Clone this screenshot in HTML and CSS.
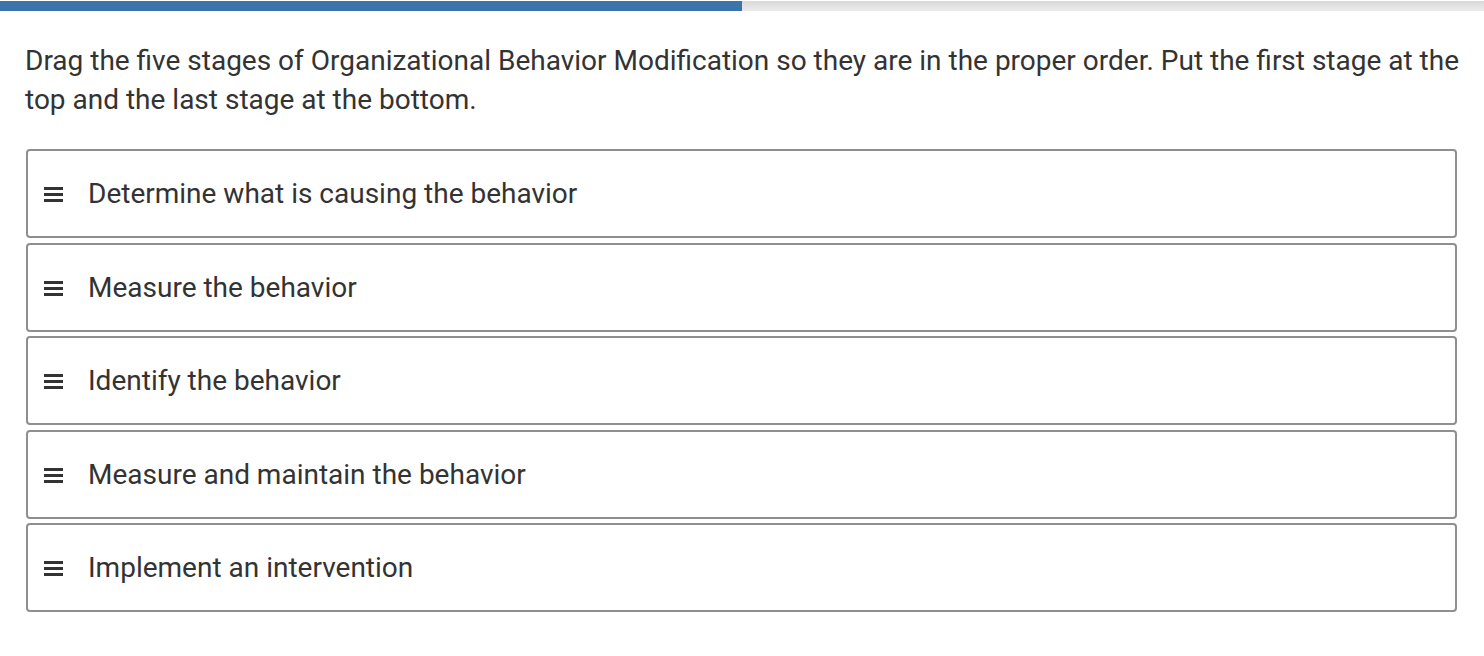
FILE: index.html
```html
<!DOCTYPE html>
<html>
<head>
<meta charset="utf-8">
<link rel="stylesheet" href="styles.css">
</head>
<body>
<div class="progress"><div class="progress-fill" style="width: 50%"></div></div>
<main class="content">
  <p class="prompt">Drag the five stages of Organizational Behavior Modification so they are in the proper order. Put the first stage at the top and the last stage at the bottom.</p>
  <ul class="sortable">
    <li class="item"><span class="handle"><i></i><i></i><i></i></span><span class="label">Determine what is causing the behavior</span></li>
    <li class="item"><span class="handle"><i></i><i></i><i></i></span><span class="label">Measure the behavior</span></li>
    <li class="item"><span class="handle"><i></i><i></i><i></i></span><span class="label">Identify the behavior</span></li>
    <li class="item"><span class="handle"><i></i><i></i><i></i></span><span class="label">Measure and maintain the behavior</span></li>
    <li class="item"><span class="handle"><i></i><i></i><i></i></span><span class="label">Implement an intervention</span></li>
  </ul>
</main>
</body>
</html>
```
FILE: styles.css
```css
html, body {
  margin: 0;
  padding: 0;
  background: #fff;
}
body {
  font-family: Roboto, "Liberation Sans", sans-serif;
  color: #333;
}
.progress {
  margin-top: 1px;
  height: 10px;
  background: linear-gradient(#d9d9d9, #ebebeb);
}
.progress-fill {
  height: 100%;
  background: #3a74ab;
}
.content {
  padding: 0 20px 0 25px;
}
.prompt {
  margin: 30px 0 0;
  font-size: 28px;
  line-height: 39px;
  color: #333;
}
.sortable {
  list-style: none;
  margin: 30px 7px 0 1px;
  padding: 0;
  display: flex;
  flex-direction: column;
  gap: 4.5px;
}
.item {
  height: 85px;
  border: 2px solid #8f8f8f;
  border-radius: 4px;
  display: flex;
  align-items: center;
  padding-left: 16px;
}
.handle {
  display: flex;
  flex-direction: column;
  gap: 3px;
  width: 19px;
  margin-right: 25px;
  margin-top: 2px;
}
.handle i {
  display: block;
  height: 3px;
  background: #333;
}
.label {
  font-size: 28px;
  color: #333;
}
```
